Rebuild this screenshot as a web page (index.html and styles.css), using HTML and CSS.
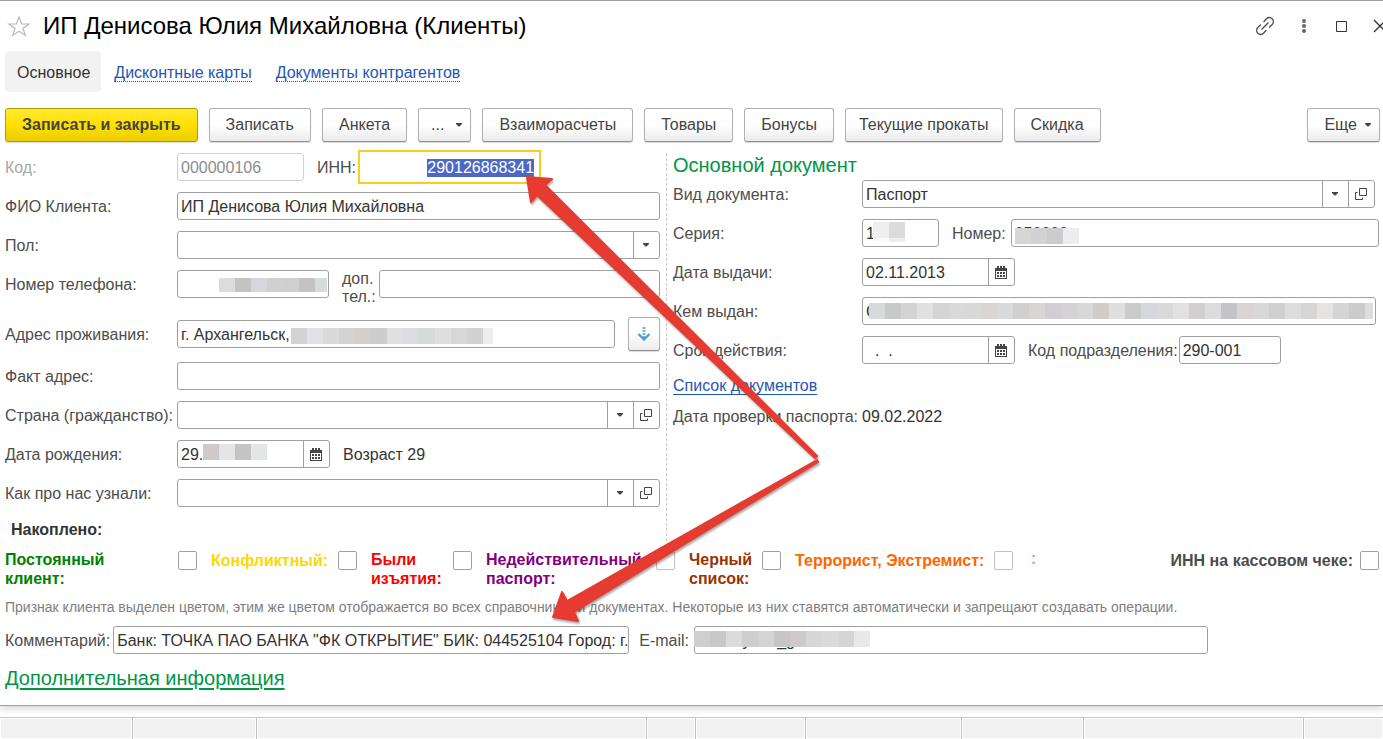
FILE: index.html
```
<!DOCTYPE html>
<html lang="ru">
<head>
  <meta charset="UTF-8" />
  <meta name="viewport" content="width=device-width, initial-scale=1" />
  <title>ИП Денисова Юлия Михайловна (Клиенты)</title>
  <link rel="stylesheet" href="styles.css">
</head>
<body>

  <!-- Общие иконки -->
  <svg class="sprite" aria-hidden="true">
    <symbol id="calendar" viewBox="0 0 12 13">
      <path d="M0 2h2V0h2v2h1V0h2v2h1V0h2v2h2v11H0z" fill="#444"/>
      <path d="M1 5h10v7H1z" fill="#fff"/>
      <path d="M2 6h2v2H2zM5 6h2v2H5zM8 6h2v2H8zM2 9h2v2H2zM5 9h2v2H5zM8 9h2v2H8z" fill="#444"/>
    </symbol>
    <symbol id="open" viewBox="0 0 12 12">
      <path d="M4.500 .5h7v7h-7zM2.500 4.500h-2v7h7v-2" fill="none" stroke="#444"/>
    </symbol>
    <symbol id="arrow" viewBox="0 0 6 4">
      <path d="M0 0h6v1L3.500 3.500h-1L0 1z" fill="#444"/>
    </symbol>
  </svg>

  <main class="window">
    <header class="title-bar">
      <button class="icon-btn" type="button" aria-label="В избранное">
        <svg width="24" height="22" viewBox="0 0 24 22"><path d="M12 2l2.600 7H22l-6 4.400 2.300 7L12 16.200 5.700 20.400l2.300-7L2 9h7.400z" fill="none" stroke="#b5b9be" stroke-width="1.200"/></svg>
      </button>
      <h1>ИП Денисова Юлия Михайловна (Клиенты)</h1>
      <div class="window-btns">
        <button class="icon-btn" type="button" aria-label="Ссылка">
          <svg width="20" height="20" viewBox="0 0 20 20" fill="none" stroke="#555" stroke-width="1.500" stroke-linecap="round"><path d="M7 13l6-6M9 5.500l2.500-2.700a4 4 0 0 1 5.700 5.700L14.500 11M5.500 9l-2.700 2.500a4 4 0 0 0 5.700 5.700L11 14.500"/></svg>
        </button>
        <button class="icon-btn" type="button" aria-label="Меню">
          <svg width="6" height="16" viewBox="0 0 6 16" fill="#666"><circle cx="3" cy="3" r="2"/><circle cx="3" cy="8" r="2"/><circle cx="3" cy="13" r="2"/></svg>
        </button>
        <button class="icon-btn" type="button" aria-label="Развернуть">
          <svg width="14" height="12" viewBox="0 0 14 12"><path d="M3.500 1.500h10v10h-10z" fill="none" stroke="#333"/></svg>
        </button>
        <button class="icon-btn" type="button" aria-label="Закрыть">
          <svg width="14" height="14" viewBox="0 0 14 14"><path d="M1 1l12 12M13 1L1 13" stroke="#333" stroke-width="1.300"/></svg>
        </button>
      </div>
    </header>

    <nav class="tabs">
      <a class="tab active" href="#main">Основное</a>
      <a class="tab" href="#cards"><span>Дисконтные карты</span></a>
      <a class="tab" href="#docs"><span>Документы контрагентов</span></a>
    </nav>

    <div class="toolbar">
      <button class="btn primary" type="button">Записать и закрыть</button>
      <button class="btn" type="button">Записать</button>
      <button class="btn" type="button">Анкета</button>
      <button class="btn menu dots" type="button">... <svg width="6" height="4"><use href="#arrow"/></svg></button>
      <button class="btn" type="button">Взаиморасчеты</button>
      <button class="btn" type="button">Товары</button>
      <button class="btn" type="button">Бонусы</button>
      <button class="btn tight" type="button">Текущие прокаты</button>
      <button class="btn" type="button">Скидка</button>
      <button class="btn menu more" type="button">Еще <svg width="6" height="4"><use href="#arrow"/></svg></button>
    </div>

    <form class="card">
      <div class="columns">
        <section class="client">
          <div class="row">
            <label class="name muted" for="kod">Код:</label>
            <input class="box kod" id="kod" type="text" value="000000106" disabled />
            <label for="inn">ИНН:</label>
            <input class="box inn" id="inn" type="text" value="290126868341" />
          </div>
          <div class="row">
            <label class="name" for="fio">ФИО Клиента:</label>
            <input class="box grow" id="fio" type="text" value="ИП Денисова Юлия Михайловна" />
          </div>
          <div class="row">
            <label class="name" for="pol">Пол:</label>
            <div class="box combo grow">
              <select id="pol"><option></option></select>
              <span class="cell"><svg width="6" height="4"><use href="#arrow"/></svg></span>
            </div>
          </div>
          <div class="row top">
            <label class="name" for="tel">Номер телефона:</label>
            <div class="masked phone">
              <input class="box" id="tel" type="text" />
              <svg class="mosaic" width="108" height="14" data-colors="dcdcdc c5c3c2 d5d7dd d1d0d0 cdd0ce c4c2c3 d6dbdc"></svg>
            </div>
            <label class="tel2" for="tel2">доп. тел.:</label>
            <input class="box grow" id="tel2" type="text" />
          </div>
          <div class="row">
            <label class="name" for="addr">Адрес проживания:</label>
            <div class="masked address grow">
              <input class="box" id="addr" type="text" value="г. Архангельск," />
              <svg class="mosaic" width="202" height="16" data-colors="d5d3d1 dfe1e5 dadada d3d3d3 d5cfcb cdcdcd e2e0de dcdce0 d6dad8 dfdfdf d7d7d8 d2d2d2 ecedef"></svg>
            </div>
            <button class="btn square" type="button" aria-label="Заполнить">
              <svg width="14" height="14" viewBox="0 0 14 14"><path d="M7 0v12" stroke="#7fb0d6" stroke-width="3" stroke-dasharray="2 1"/><path d="M1.500 7L7 12.500 12.500 7" fill="none" stroke="#5b9bc8" stroke-width="2.400"/></svg>
            </button>
          </div>
          <div class="row">
            <label class="name" for="fact">Факт адрес:</label>
            <input class="box grow" id="fact" type="text" />
          </div>
          <div class="row">
            <label class="name" for="strana">Страна (гражданство):</label>
            <div class="box combo grow">
              <select id="strana"><option></option></select>
              <span class="cell"><svg width="6" height="4"><use href="#arrow"/></svg></span>
              <button class="cell" type="button" aria-label="Открыть"><svg width="12" height="12"><use href="#open"/></svg></button>
            </div>
          </div>
          <div class="row">
            <label class="name" for="birth">Дата рождения:</label>
            <div class="masked birth">
              <div class="box combo date">
                <input id="birth" type="text" value="29." />
                <button class="cell" type="button" aria-label="Календарь"><svg width="12" height="13"><use href="#calendar"/></svg></button>
              </div>
              <svg class="mosaic" width="64" height="16" data-colors="cfcac9 e4e5e8 c6c3c4 e4e5e8"></svg>
            </div>
            <span class="value">Возраст 29</span>
          </div>
          <div class="row">
            <label class="name" for="source">Как про нас узнали:</label>
            <div class="box combo grow">
              <select id="source"><option></option></select>
              <span class="cell"><svg width="6" height="4"><use href="#arrow"/></svg></span>
              <button class="cell" type="button" aria-label="Открыть"><svg width="12" height="12"><use href="#open"/></svg></button>
            </div>
          </div>
          <p class="total">Накоплено:</p>
        </section>

        <section class="document">
          <h2>Основной документ</h2>
          <div class="row">
            <label class="name" for="vid">Вид документа:</label>
            <div class="box combo grow vid">
              <select id="vid"><option>Паспорт</option></select>
              <span class="cell"><svg width="6" height="4"><use href="#arrow"/></svg></span>
              <button class="cell" type="button" aria-label="Открыть"><svg width="12" height="12"><use href="#open"/></svg></button>
            </div>
          </div>
          <div class="row">
            <label class="name" for="seria">Серия:</label>
            <div class="masked seria">
              <input class="box" id="seria" type="text" value="1" />
              <svg class="mosaic" width="32" height="20" data-colors="efefef dbdbdb" data-tail="fafafa eeeeee"></svg>
            </div>
            <label for="nomer">Номер:</label>
            <div class="masked nomer grow">
              <input class="box" id="nomer" type="text" value="050000" />
              <svg class="mosaic" width="64" height="16" data-colors="d8d6d4 d2d2d5 cccccc ecedf0"></svg>
            </div>
          </div>
          <div class="row">
            <label class="name" for="issued">Дата выдачи:</label>
            <div class="box combo date">
              <input id="issued" type="text" value="02.11.2013" />
              <button class="cell" type="button" aria-label="Календарь"><svg width="12" height="13"><use href="#calendar"/></svg></button>
            </div>
          </div>
          <div class="row">
            <label class="name" for="kem">Кем выдан:</label>
            <div class="masked kem grow">
              <input class="box" id="kem" type="text" value="О" />
              <svg class="mosaic" width="504" height="16" data-colors="d6dad9 c9c9c9 d3d3d3 e0e0e0 d4d4d4 d9d9d9 d8d8d8 dad5d2 d8dadc d0d0d0 d8d6d4 d0ced2 d4d2d4 d8d8d8 d2ccc9 dfdfdf cbcbcb d5d7da d9d9d9 e1e1e1 d2cfd1 dcdcdc c4c4c6 d9d5d5 d8d8d8 d0d0d0 dddddd d6d6d6 e5e4e3 d5d5d5 cccccc dfdddb"></svg>
            </div>
          </div>
          <div class="row">
            <label class="name" for="srok">Срок действия:</label>
            <div class="box combo date">
              <input id="srok" type="text" value="&nbsp; .&nbsp; ." />
              <button class="cell" type="button" aria-label="Календарь"><svg width="12" height="13"><use href="#calendar"/></svg></button>
            </div>
            <label for="podr">Код подразделения:</label>
            <input class="box podr" id="podr" type="text" value="290-001" />
          </div>
          <div class="row link-row"><a href="#list">Список документов</a></div>
          <div class="row check-row">
            <span class="name">Дата проверки паспорта:</span>
            <span class="value">09.02.2022</span>
          </div>
        </section>
      </div>

      <div class="flags">
        <div class="flag green"><label for="f1">Постоянный клиент:</label><input id="f1" type="checkbox" /></div>
        <div class="flag yellow"><label for="f2">Конфликтный:</label><input id="f2" type="checkbox" /></div>
        <div class="flag red"><label for="f3">Были изъятия:</label><input id="f3" type="checkbox" /></div>
        <div class="flag purple"><label for="f4">Недействительный паспорт:</label><input id="f4" type="checkbox" disabled /></div>
        <div class="flag brown"><label for="f5">Черный список:</label><input id="f5" type="checkbox" /></div>
        <div class="flag orange"><label for="f6">Террорист, Экстремист:</label><input id="f6" type="checkbox" disabled /></div>
        <span class="colon">:</span>
        <div class="flag check"><label for="f7">ИНН на кассовом чеке:</label><input id="f7" type="checkbox" /></div>
      </div>

      <p class="hint">Признак клиента выделен цветом, этим же цветом отображается во всех справочниках и документах. Некоторые из них ставятся автоматически и запрещают создавать операции.</p>

      <div class="row contacts">
        <label for="comment">Комментарий:</label>
        <input class="box comment" id="comment" type="text" value='Банк: ТОЧКА ПАО БАНКА "ФК ОТКРЫТИЕ" БИК: 044525104 Город: г.' />
        <label for="email">E-mail:</label>
        <div class="masked email">
          <input class="box" id="email" type="text" value="aaaaayaaa_g" />
          <svg class="mosaic" width="176" height="16" data-colors="cfcfcf c8c8c8 dcdadb cfcdcf d5d3d3 c6c6c6 cfcaca d5d7d6 dadada d5d5d5 e8e8e8"></svg>
        </div>
      </div>

      <a class="more-info" href="#info">Дополнительная информация</a>
    </form>
  </main>

  <!-- Шапка списка под формой -->
  <div class="list-head">
    <span></span><span></span><span></span><span></span><span></span><span></span><span></span><span></span><span></span>
  </div>

  <svg class="pointers" width="320" height="480" viewBox="510 160 320 480" aria-hidden="true">
    <g fill="#e53b30" stroke="#e53b30" stroke-width="2" stroke-linejoin="round">
      <path d="M527 177L552 179 545 185 817 456 815 458 537 195 531 202z"/>
      <path d="M817 460L818 462 574 612 578 621 553 617 562 592 567 601z"/>
    </g>
  </svg>

  <script>
    // Квадратики поверх скрытых данных
    const cell = 16;

    document.querySelectorAll('.mosaic').forEach(svg => {
      const addRow = (colors, y, height) => {
        colors.split(' ').forEach((color, i) => {
          const rect = document.createElementNS('http://www.w3.org/2000/svg', 'rect');
          rect.setAttribute('x', i * cell);
          rect.setAttribute('y', y);
          rect.setAttribute('width', cell);
          rect.setAttribute('height', height);
          rect.setAttribute('fill', '#' + color);
          svg.appendChild(rect);
        });
      };
      addRow(svg.dataset.colors, 0, cell);
      if (svg.dataset.tail) addRow(svg.dataset.tail, cell, 4);
    });

    // ИНН выделен при открытии формы
    const inn = document.getElementById('inn');
    inn.focus();
    inn.select();
  </script>

</body>
</html>
```
FILE: styles.css
```
* {
  box-sizing: border-box;
}
body {
  margin: 0;
  font-family: "Liberation Sans", Arial, sans-serif;
  font-size: 16px;
  line-height: 18px;
  color: #4d4d4d;
  background: #fff;
  overflow-x: hidden;
}
button,
input,
select {
  font: inherit;
  color: inherit;
  margin: 0;
}
h1,
h2,
p {
  margin: 0;
  font-weight: normal;
}
.sprite {
  display: none;
}
.window {
  border-top: 1px solid #a0a0a0;
  border-bottom: 1px solid #a0a0a0;
  box-shadow: 0 2px 8px rgba(0, 0, 0, 0.2);
  padding-bottom: 15px;
}

/* Заголовок */
.title-bar {
  display: flex;
  align-items: center;
  height: 50px;
  padding-left: 7px;
}
h1 {
  margin-left: 12px;
  font-size: 24px;
  line-height: 28px;
  color: #000;
}
.icon-btn {
  display: flex;
  padding: 0;
  border: none;
  background: none;
  cursor: pointer;
}
.window-btns {
  display: flex;
  align-items: center;
  gap: 26px;
  margin-left: auto;
  margin-right: -4px;
}

/* Вкладки */
.tabs {
  display: flex;
  padding-left: 5px;
  gap: 1px;
}
.tab {
  padding: 13px 11px 11px 12px;
  line-height: 17px;
  color: #1f55b5;
  text-decoration: none;
}
.tab span {
  border-bottom: 1px dotted #1f55b5;
}
.tab.active {
  color: #333;
  background: #f2f2f2;
  border-radius: 4px;
}

/* Кнопки */
.toolbar {
  display: flex;
  gap: 11px;
  padding: 16px 3px 9px 5px;
}
.btn {
  height: 34px;
  padding: 0 16px;
  border: 1px solid #b0b0b0;
  border-bottom-color: #8f8f8f;
  border-radius: 3px;
  background: linear-gradient(#fff 50%, #ebebeb);
  box-shadow: 0 1px 1px rgba(0, 0, 0, 0.15);
  color: #444;
  cursor: pointer;
  white-space: nowrap;
}
.btn.primary {
  border-color: #b39b00;
  background: linear-gradient(#ffe835, #ffe000 50%, #ebcd00);
  font-weight: bold;
}
.btn.tight {
  padding: 0 13px;
}
.btn.menu {
  display: flex;
  align-items: center;
  gap: 8px;
  padding: 0 8px 0 16px;
}
.btn.dots {
  gap: 12px;
  padding-left: 12px;
}
.btn.more {
  margin-left: auto;
}
.btn.square {
  display: flex;
  align-items: center;
  justify-content: center;
  width: 32px;
  padding: 0;
}

/* Форма */
.card {
  padding: 0 4px 0 5px;
}
.columns {
  display: grid;
  grid-template-columns: 655fr 713fr;
  gap: 6px;
  padding-top: 2px;
}
.client,
.document {
  display: flex;
  flex-direction: column;
  gap: 11px;
  min-width: 0;
}
.document {
  padding-left: 6px;
  border-left: 1px dashed #ccc;
}
.row {
  display: flex;
  align-items: center;
}
.row label,
.row .value {
  padding-top: 2px;
}
.check-row .value {
  padding-top: 0;
}
.row.top {
  align-items: flex-start;
}
.row.top label {
  padding-top: 0;
}
.row.top .name {
  line-height: 30px;
}
.name {
  flex: none;
  white-space: nowrap;
}
.client .name {
  width: 172px;
}
.document .name {
  width: 189px;
}
.muted {
  color: #a6a6a6;
}
.grow {
  flex: 1;
  min-width: 0;
}
.value {
  color: #333;
}
.box {
  height: 28px;
  padding: 2px 3px 0;
  border: 1px solid #a0a0a0;
  border-radius: 3px;
  background: #fff;
  color: #333;
  outline: none;
}
.kod {
  width: 127px;
  margin-right: 13px;
  border-color: #d0d0d0;
  color: #8c8c8c;
}
.inn {
  width: 183px;
  height: 34px;
  margin: -3px 0 -3px 2px;
  padding: 2px 5px 0;
  border: 2px solid #fbcb1d;
  border-radius: 0;
  text-align: right;
}
.inn::selection {
  background: #4c68c4;
  color: #fff;
}
.combo {
  display: flex;
  padding: 0;
}
.combo select,
.combo input {
  flex: 1;
  min-width: 0;
  padding: 2px 3px 0;
  border: none;
  background: none;
  outline: none;
  appearance: none;
}
.cell {
  display: flex;
  align-items: center;
  justify-content: center;
  flex: none;
  width: 26px;
  padding: 0 1px 0 0;
  border: none;
  border-left: 1px solid #a0a0a0;
  background: none;
}
.date {
  width: 153px;
}
.masked {
  position: relative;
}
.masked > input {
  display: block;
  width: 100%;
}
.mosaic {
  position: absolute;
  top: 8px;
  left: 4px;
}
.phone {
  width: 152px;
}
.phone .mosaic {
  left: 42px;
}
.tel2 {
  width: 37px;
  margin-left: 13px;
}
.address {
  margin-right: 13px;
}
.address .mosaic {
  left: 114px;
}
.birth {
  margin-right: 13px;
}
.birth .mosaic {
  top: 4px;
  left: 26px;
}
.total {
  padding: 1px 0 0 6px;
  font-weight: bold;
  line-height: 22px;
  color: #333;
}
h2 {
  margin-bottom: -8px;
  font-size: 20px;
  line-height: 24px;
  color: #009646;
}
.vid {
  margin-right: 4px;
}
.seria {
  width: 77px;
  margin-right: 13px;
}
.seria .mosaic {
  top: 3px;
  left: 11px;
}
.nomer {
  margin-left: 5px;
}
.nomer .mosaic {
  top: 9px;
}
.kem {
  margin-right: 3px;
}
.kem .mosaic {
  top: 6px;
  left: 7px;
}
.document .date + label {
  margin: 0 1px 0 13px;
}
.podr {
  width: 102px;
}
.link-row {
  height: 22px;
}
.link-row a {
  color: #1f55b5;
  text-underline-offset: 3px;
}

/* Признаки клиента */
.flags {
  display: flex;
  gap: 14px;
  margin-top: 9px;
  font-weight: bold;
}
.flag {
  display: flex;
  gap: 7px;
}
.flag label {
  line-height: 19px;
}
.flag input {
  flex: none;
  width: 19px;
  height: 19px;
  margin-top: 1px;
  border: 1px solid #a0a0a0;
  border-radius: 2px;
  background: #fff;
  appearance: none;
}
.flag input:disabled {
  border-color: #bfbfbf;
}
.green label {
  width: 166px;
  padding-right: 50px;
  color: #008000;
}
.yellow label {
  width: 120px;
  color: #ffd700;
}
.red label {
  width: 75px;
  color: #f00;
}
.purple label {
  width: 163px;
  color: #800080;
}
.brown label {
  width: 66px;
  color: #993300;
}
.orange label {
  width: 192px;
  white-space: nowrap;
  color: #ff6600;
}
.yellow label,
.orange label,
.check label {
  padding-top: 1px;
}
.colon {
  margin-left: 4px;
  color: #ee82ee;
}
.check {
  margin-left: auto;
  white-space: nowrap;
}
.hint {
  margin-top: 10px;
  font-size: 14px;
  color: #808080;
}
.contacts {
  margin-top: 10px;
}
.comment {
  width: 516px;
  margin: 0 10px 0 3px;
  padding-right: 0;
}
.email {
  width: 514px;
  margin-left: 5px;
}
.email .mosaic {
  top: 5px;
  left: 0;
}
.more-info {
  display: inline-block;
  margin-top: 12px;
  font-size: 20px;
  line-height: 24px;
  color: #009646;
  text-underline-offset: 3px;
}

/* Шапка списка */
.list-head {
  display: grid;
  grid-template-columns: 133fr 124fr 390fr 49fr 110fr 156fr 122fr 220fr 79fr;
  height: 22px;
  margin-top: 11px;
  border-top: 1px solid #c8c8c8;
}
.list-head span {
  border-right: 1px solid #c0c0c0;
  background: #f1f1f1;
  box-shadow: inset 0 0 0 1px #fff;
}
.list-head span:last-child {
  border-right: none;
}

/* Стрелки-указатели */
.pointers {
  position: absolute;
  top: 160px;
  left: 510px;
  filter: drop-shadow(1px 2px 1px rgba(0, 0, 0, 0.35));
  pointer-events: none;
}
```
